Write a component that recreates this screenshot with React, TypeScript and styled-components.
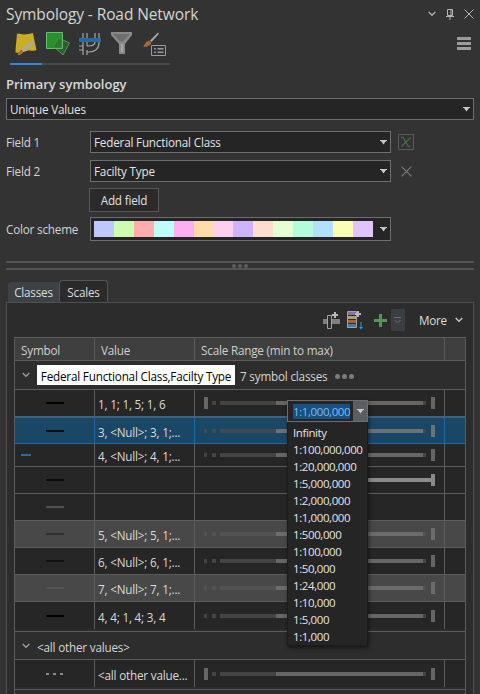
import React from 'react';
import styled, { createGlobalStyle } from 'styled-components';

const GlobalStyle = createGlobalStyle`
  html, body {
    margin: 0;
    padding: 0;
    height: 694px;
    overflow: hidden;
    background: #333333;
  }
  * {
    box-sizing: border-box;
  }
`;

const Pane = styled.div`
  width: 480px;
  height: 694px;
  overflow: hidden;
  padding: 0 6px;
  background: #333333;
  color: #dcdcdc;
  font-family: 'Open Sans', 'Noto Sans', sans-serif;
  font-size: 11.7px;
  letter-spacing: -0.19px;
`;

const TitleBar = styled.div`
  display: flex;
  align-items: center;
  height: 28px;
`;

const Title = styled.div`
  flex: 1;
  font-size: 15.5px;
  letter-spacing: -0.1px;
  color: #d4d4d4;
`;

const WindowButtons = styled.div`
  display: flex;
  align-items: center;
  gap: 10px;
`;

const IconBar = styled.div`
  display: flex;
  align-items: center;
  justify-content: space-between;
  height: 30px;
`;

const IconGroup = styled.div`
  display: flex;
  align-items: center;
  gap: 8px;
  padding-left: 9px;
`;

const TabLine = styled.div`
  width: 160px;
  height: 2px;
  margin: 5px 0 0 4px;
  background: #4a4a4a;
`;

const TabLineActive = styled.div`
  width: 32px;
  height: 2px;
  background: #2b8ae0;
`;

const Heading = styled.div`
  height: 18px;
  line-height: 18px;
  margin: 10px 0 5px;
  font-size: 13px;
  font-weight: 600;
  letter-spacing: 0;
  color: #d8d8d8;
`;

const Select = styled.div<{ $height?: number }>`
  display: flex;
  align-items: center;
  justify-content: space-between;
  height: ${p => p.$height ?? 22}px;
  padding: 0 3px;
  background: #252526;
  border: 1px solid #6e6e6e;
  color: #e2e2e2;
`;

const FieldRow = styled.div<{ $gap: number }>`
  display: grid;
  grid-template-columns: 84px 301px 1fr;
  align-items: center;
  margin-top: ${p => p.$gap}px;
`;

const FieldLabel = styled.div`
  color: #d4d4d4;
`;

const Side = styled.div`
  display: flex;
  justify-content: center;
  width: 16px;
  margin-left: 7px;
`;

const AddButton = styled.button`
  display: block;
  width: 70px;
  height: 24px;
  margin: 6px 0 0 83px;
  padding: 0;
  background: #2a2a2a;
  border: 1px solid #5a5a5a;
  color: #e0e0e0;
  font: inherit;
  letter-spacing: inherit;
`;

const Ramp = styled.div`
  display: flex;
  width: 279px;
  height: 16px;
`;

const Swatch = styled.div<{ $color: string }>`
  flex: 1;
  background: ${p => p.$color};
`;

const Splitter = styled.div`
  display: flex;
  align-items: center;
  justify-content: center;
  gap: 2px;
  height: 9px;
  margin-top: 20px;
  border-top: 2px solid #545454;
  border-bottom: 2px solid #545454;
`;

const Grip = styled.span`
  width: 4px;
  height: 4px;
  border-radius: 50%;
  background: #5e5e5e;
`;

const Tabs = styled.div`
  display: flex;
  align-items: flex-end;
  height: 22px;
  margin-top: 10px;
  padding-left: 2px;
`;

const Tab = styled.div<{ $active?: boolean }>`
  display: flex;
  align-items: center;
  justify-content: center;
  width: ${p => (p.$active ? 49 : 51)}px;
  height: ${p => (p.$active ? 22 : 20)}px;
  background: ${p => (p.$active ? '#2b2b2b' : '#3e4246')};
  border: ${p => (p.$active ? '1px solid #555555' : 'none')};
  border-bottom: none;
  border-radius: 3px 3px 0 0;
  color: #dcdcdc;
`;

const Panel = styled.div`
  height: 400px;
  padding: 0 7px;
  background: #2c2c2c;
  border: 1px solid #505050;
`;

const Toolbar = styled.div`
  display: flex;
  align-items: center;
  justify-content: flex-end;
  height: 34px;
  padding-right: 3px;
`;

const ToolIcon = styled.span<{ $gap: number }>`
  display: flex;
  margin-right: ${p => p.$gap}px;
`;

const SplitButton = styled.div`
  display: flex;
  align-items: center;
  justify-content: center;
  width: 14px;
  height: 22px;
  margin-right: 14px;
  background: #3a3d41;
`;

const More = styled.div`
  display: flex;
  align-items: center;
  gap: 8px;
  color: #dcdcdc;
`;

const Table = styled.div`
  border: 1px solid #5c5c5c;
  border-bottom: none;
`;

const HeaderRow = styled.div`
  display: grid;
  grid-template-columns: 80px 100px 250px 20px;
  height: 23px;
  background: #3f3f3f;
  border-bottom: 1px solid #5c5c5c;
`;

const HeaderCell = styled.div`
  display: flex;
  align-items: center;
  padding: 2px 0 0 6px;
  border-right: 1px solid #5c5c5c;
  color: #cfcfcf;
  &:last-child {
    border-right: none;
  }
`;

const GroupRow = styled.div<{ $height: number; $top?: number }>`
  display: flex;
  align-items: center;
  gap: 7px;
  height: ${p => p.$height}px;
  margin-top: ${p => p.$top ?? 0}px;
  padding-left: 7px;
  background: #2d2d2d;
  border-top: ${p => (p.$top ? '1px solid #5c5c5c' : 'none')};
  border-bottom: 1px solid #5c5c5c;
  color: #d4d4d4;
`;

const GroupLabel = styled.span`
  padding-top: 2px;
`;

const GroupInput = styled.div`
  display: flex;
  align-items: center;
  justify-content: center;
  width: 198px;
  height: 20px;
  padding-top: 1px;
  background: #ffffff;
  color: #000000;
  white-space: nowrap;
`;

const GroupMeta = styled.div`
  display: flex;
  align-items: center;
  gap: 8px;
  margin-left: -2px;
  padding-top: 2px;
`;

const Ellipsis = styled.div`
  display: flex;
  gap: 2px;
`;

const EllipsisDot = styled.span`
  width: 5px;
  height: 5px;
  border-radius: 50%;
  background: #7c7c7c;
`;

type Tone = 'plain' | 'selected' | 'alt';

const rowColors: Record<Tone, string> = {
  plain: '#262626',
  selected: '#1b4766',
  alt: '#484848',
};

const Row = styled.div<{ $tone: Tone; $height: number; $open?: boolean }>`
  display: grid;
  grid-template-columns: 80px 100px 250px 20px;
  height: ${p => p.$height}px;
  background: ${p => rowColors[p.$tone]};
  border-bottom: ${p => (p.$open ? 'none' : `1px solid ${p.$tone === 'selected' ? '#1f6aa5' : '#5c5c5c'}`)};
  border-top: ${p => (p.$tone === 'selected' ? '1px solid #1f6aa5' : 'none')};
`;

const Cell = styled.div<{ $selected?: boolean }>`
  display: flex;
  align-items: center;
  min-width: 0;
  border-right: 1px solid ${p => (p.$selected ? '#1f6aa5' : '#5c5c5c')};
  &:last-child {
    border-right: none;
  }
`;

const SymbolCell = styled(Cell)<{ $left?: boolean }>`
  justify-content: ${p => (p.$left ? 'flex-start' : 'center')};
  padding-left: ${p => (p.$left ? 6 : 0)}px;
`;

const ValueCell = styled(Cell)`
  padding: 2px 0 0 3px;
  color: #dadada;
  white-space: nowrap;
  overflow: hidden;
`;

const ScaleCell = styled(Cell)<{ $overlay?: boolean }>`
  position: ${p => (p.$overlay ? 'relative' : 'static')};
  padding-left: 9px;
`;

const SymbolLine = styled.span<{ $color: string; $width?: number }>`
  width: ${p => p.$width ?? 18}px;
  height: 2px;
  background: ${p => p.$color};
`;

const DashedLine = styled.span`
  width: 17px;
  height: 2px;
  background: repeating-linear-gradient(90deg, #8a8a8a 0 3px, transparent 3px 7px);
`;

const Slider = styled.div<{ $right?: boolean }>`
  display: flex;
  align-items: center;
  justify-content: ${p => (p.$right ? 'flex-end' : 'flex-start')};
  width: 231px;
  height: 12px;
`;

const Handle = styled.span<{ $color: string; $gapRight?: number; $gapLeft?: number }>`
  width: 4px;
  height: 12px;
  margin-right: ${p => p.$gapRight ?? 0}px;
  margin-left: ${p => p.$gapLeft ?? 0}px;
  background: ${p => p.$color};
`;

const Dot = styled.span<{ $color: string; $gapRight: number; $width?: number }>`
  width: ${p => p.$width ?? 4}px;
  height: 4px;
  margin-right: ${p => p.$gapRight}px;
  background: ${p => p.$color};
`;

const Track = styled.span<{ $color: string; $width: number }>`
  width: ${p => p.$width}px;
  height: 4px;
  background: ${p => p.$color};
`;

const ScaleMenu = styled.div`
  position: absolute;
  left: 92px;
  top: 10px;
  z-index: 5;
  width: 81px;
  font-size: 11.5px;
  letter-spacing: -0.4px;
  box-shadow: 1px 2px 4px rgba(0, 0, 0, 0.5);
`;

const ScaleInput = styled.div`
  display: flex;
  align-items: stretch;
  height: 22px;
  background: #252526;
  border: 1px solid #6e6e6e;
`;

const ScaleText = styled.div`
  display: flex;
  flex: 1;
  align-items: center;
  padding-left: 5px;
`;

const ScaleSelection = styled.span`
  background: #1b4f80;
  color: #79bdf0;
  line-height: 15px;
`;

const ScaleArrow = styled.div`
  display: flex;
  align-items: center;
  justify-content: center;
  width: 14px;
  background: #5a5d61;
`;

const ScaleList = styled.div`
  padding: 2px 0 0;
  background: #252526;
  border: 1px solid #1c1c1c;
  border-top: none;
`;

const ScaleItem = styled.div`
  height: 17px;
  padding-left: 5px;
  line-height: 17px;
  color: #e4e4e4;
  white-space: nowrap;
`;

const Arrow = () => (
  <svg width="7" height="5" viewBox="0 0 7 5">
    <path d="M0 0h7v1H6L3.5 4.5 1 1H0z" fill="#c8c8c8" />
  </svg>
);

const Chevron = ({ color = '#9a9a9a', size = 8 }: { color?: string; size?: number }) => (
  <svg width={size} height="6" viewBox="0 0 8 6">
    <path d="M.7 1l3.3 3.3L7.3 1" fill="none" stroke={color} strokeWidth="1.4" />
  </svg>
);

const PinIcon = () => (
  <svg width="8" height="11" viewBox="0 0 8 11">
    <path d="M1.5.5h5v6h-5zM5 .5v6M0 7.5h8M4 7.5V11" fill="none" stroke="#b4b4b4" strokeWidth="1" />
  </svg>
);

const CloseIcon = ({ size = 10, color = '#b4b4b4' }: { size?: number; color?: string }) => (
  <svg width={size} height={size} viewBox="0 0 10 10">
    <path d="M.5.5l9 9M9.5.5l-9 9" fill="none" stroke={color} strokeWidth="1" />
  </svg>
);

const MenuIcon = () => (
  <svg width="14" height="13" viewBox="0 0 14 13" style={{ marginRight: 3 }}>
    <path d="M0 0h14v3H0zM0 5h14v3H0zM0 10h14v3H0z" fill="#9c9c9c" />
  </svg>
);

const PaintIcon = () => (
  <svg width="23" height="25" viewBox="0 0 23 25">
    <path d="M1 3c3-.5 5 .5 8 .5 3 0 6-1 9-1.500.5 3 2.500 12 3.500 17-3 1.500-5 0-8 .5-3 .5-4 1.500-7 2-2 .3-4 .3-6 0 0-6 1-12 1.500-18.500z" fill="#c9ad23" />
    <path d="M17.500 9.500l2 2.500-11 9-2-2.500z" fill="#a8a8a8" />
    <path d="M6.500 18.500l2 2.500-2.500 2.500c-1 .6-3 .8-3.500.5.500-1 1-2.500 1.800-3.500z" fill="#a9683a" />
  </svg>
);

const FillIcon = () => (
  <svg width="25" height="25" viewBox="0 0 25 25">
    <path d="M7.500 15.500l5-8.500 11 5-6.500 12z" fill="#2f5c33" stroke="#4f9a55" />
    <path d="M.5 1.500h16v16H.5z" fill="#2b8f2f" stroke="#66c06a" />
    <path d="M7.500 15.500l5-8.500 3.500 1.600V17H8.300z" fill="#2a7a2e" stroke="#4f9a55" strokeWidth=".6" />
  </svg>
);

const RoadsIcon = () => (
  <svg width="24" height="24" viewBox="0 0 24 24">
    <path
      d="M4 2v5M8 2v5M16 2v5M20 2v5M4 11v13M8 11v4M8 19v5M0 15h4M0 19h4M8 15h1c4 0 7-1 7-4M8 21h2c6 0 10-3 10-10"
      fill="none"
      stroke="#a6a6a6"
      strokeWidth="1.2"
    />
    <path d="M0 7h22v4H0z" fill="#2a6aa0" />
  </svg>
);

const FunnelIcon = () => (
  <svg width="24" height="24" viewBox="0 0 24 24">
    <path d="M0 1h21v3l-7 9v10H8V13L0 4z" fill="#8a8a8a" />
    <path d="M2 3h17l-7 7.500H9z" fill="#6e6e6e" />
    <path d="M10 13h2v8h-2z" fill="#a8a8a8" />
  </svg>
);

const LabelIcon = () => (
  <svg width="24" height="25" viewBox="0 0 24 25">
    <path d="M15 1.500l1 1.200-7.500 8.300-1.500-1.500z" fill="#a8a8a8" />
    <path d="M6 9.500l2.500 2.500c-1.500 2.500-4 4-8 4 .5-2.500 2.500-5.500 5.500-6.500z" fill="#a9683a" />
    <path d="M8.500 14.500h14v10h-14z" fill="none" stroke="#9a9a9a" />
    <path d="M11 17h2v1.500h-2zM11 20.500h2V22h-2z" fill="#8d7fc0" />
    <path d="M14.500 17h6v1.500h-6zM14.500 20.500h6V22h-6z" fill="#9a9a9a" />
  </svg>
);

const FieldFxIcon = () => (
  <svg width="16" height="16" viewBox="0 0 16 16">
    <path d="M.5.5h15v15H.5z" fill="none" stroke="#5a5a5a" />
    <path d="M3.500 3c3 0 2 2 4 5s2 5 5 5M12.500 3.500l-9 9M3 3.500h3" fill="none" stroke="#466b46" strokeWidth="1.2" />
  </svg>
);

const AddBreakIcon = () => (
  <svg width="17" height="17" viewBox="0 0 17 17">
    <path d="M0 7h17v5H0z" fill="#7f7f7f" />
    <path d="M4.500 3.500h4v13h-4z" fill="#2c2c2c" stroke="#a2a2a2" />
    <path d="M11 0h2v2h2v2h-2v2h-2V4H9V2h2z" fill="#b8b8b8" />
  </svg>
);

const AddClassesIcon = () => (
  <svg width="17" height="19" viewBox="0 0 17 19">
    <path d="M.5.500h9v16h-9z" fill="#2c2c2c" stroke="#a2a2a2" />
    <path d="M1 1h8v3H1z" fill="#8270b4" />
    <path d="M1 5h8v3H1z" fill="#b0a060" />
    <path d="M1 9h8v3H1z" fill="#b06030" />
    <path d="M1 13h8v3H1z" fill="#3d7fb0" />
    <path d="M10 0h2v2h2v2h-2v2h-2V4H8V2h2z" fill="#b8b8b8" />
    <path d="M13.500 11h1v5H16l-2 2.500-2-2.500h1.500z" fill="#3c94dc" />
  </svg>
);

const PlusIcon = () => (
  <svg width="13" height="13" viewBox="0 0 13 13">
    <path d="M5 0h3v5h5v3H8v5H5V8H0V5h5z" fill="#4e9a4e" />
  </svg>
);

const SmallDrop = () => (
  <svg width="7" height="7" viewBox="0 0 7 7">
    <path d="M0 .5h7M.5 3l3 3 3-3" fill="none" stroke="#6e6e6e" />
  </svg>
);

const ramp = [
  '#bec8ff', '#ccfdb0', '#ffadad', '#bdfdfb', '#ffafef', '#ffdca8', '#ffd0ee',
  '#ceb4fd', '#ffdcd0', '#e6ffd2', '#b4fdda', '#b4e0ff', '#f8ffb4', '#e0c4ff',
];

const scales = [
  'Infinity', '1:100,000,000', '1:20,000,000', '1:5,000,000', '1:2,000,000', '1:1,000,000', '1:500,000',
  '1:100,000', '1:50,000', '1:24,000', '1:10,000', '1:5,000', '1:1,000',
];

interface SymbolClass {
  line: string;
  value: string;
  tone: Tone;
  height: number;
  slider: 'full' | 'dots' | 'right' | 'none';
  short?: boolean;
  overlay?: boolean;
}

const classes: SymbolClass[] = [
  { line: '#000000', value: '1, 1; 1, 5; 1, 6', tone: 'plain', height: 27, slider: 'full', overlay: true },
  { line: '#0d0d0d', value: '3, <Null>; 3, 1;...', tone: 'selected', height: 27, slider: 'dots' },
  { line: '#2a6aa0', value: '4, <Null>; 4, 1;...', tone: 'plain', height: 23, slider: 'dots', short: true },
  { line: '#0a0a0a', value: '', tone: 'plain', height: 27, slider: 'right' },
  { line: '#505050', value: '', tone: 'plain', height: 27, slider: 'none' },
  { line: '#303030', value: '5, <Null>; 5, 1;...', tone: 'alt', height: 27, slider: 'dots' },
  { line: '#111111', value: '6, <Null>; 6, 1;...', tone: 'plain', height: 27, slider: 'dots' },
  { line: '#555555', value: '7, <Null>; 7, 1;...', tone: 'alt', height: 27, slider: 'dots' },
];

const RangeSlider = ({ kind, tone }: { kind: SymbolClass['slider']; tone: Tone }) => {
  if (kind === 'none') return null;
  if (kind === 'right') {
    return (
      <Slider $right>
        <Track $color="#8a8a8a" $width={144} />
        <Handle $color="#8a8a8a" />
      </Slider>
    );
  }
  const dim = tone === 'alt' ? '#525252' : tone === 'selected' ? '#3f4a52' : '#444444';
  const lit = tone === 'alt' ? '#6c6c6c' : tone === 'selected' ? '#6a7278' : '#666666';
  return (
    <Slider>
      {kind === 'full' ? <Handle $color={lit} $gapRight={4} /> : <Dot $color={dim} $gapRight={5} $width={3} />}
      <Dot $color={dim} $gapRight={4} />
      <Track $color={dim} $width={56} />
      <Track $color={lit} $width={147} />
      <Dot $color={dim} $gapRight={0} $width={3} />
      <Handle $color={lit} $gapLeft={5} />
    </Slider>
  );
};

const App: React.FC = () => (
  <>
    <GlobalStyle />
    <Pane>
      <TitleBar>
        <Title>Symbology - Road Network</Title>
        <WindowButtons>
          <Chevron color="#b0b0b0" />
          <PinIcon />
          <CloseIcon />
        </WindowButtons>
      </TitleBar>
      <IconBar>
        <IconGroup>
          <PaintIcon />
          <FillIcon />
          <RoadsIcon />
          <FunnelIcon />
          <LabelIcon />
        </IconGroup>
        <MenuIcon />
      </IconBar>
      <TabLine>
        <TabLineActive />
      </TabLine>
      <Heading>Primary symbology</Heading>
      <Select>
        Unique Values
        <Arrow />
      </Select>
      <FieldRow $gap={11}>
        <FieldLabel>Field 1</FieldLabel>
        <Select>
          Federal Functional Class
          <Arrow />
        </Select>
        <Side>
          <FieldFxIcon />
        </Side>
      </FieldRow>
      <FieldRow $gap={7}>
        <FieldLabel>Field 2</FieldLabel>
        <Select>
          Facilty Type
          <Arrow />
        </Select>
        <Side>
          <CloseIcon size={11} color="#7c7c7c" />
        </Side>
      </FieldRow>
      <AddButton>Add field</AddButton>
      <FieldRow $gap={5}>
        <FieldLabel>Color scheme</FieldLabel>
        <Select $height={24}>
          <Ramp>
            {ramp.map(color => (
              <Swatch key={color} $color={color} />
            ))}
          </Ramp>
          <Arrow />
        </Select>
      </FieldRow>
      <Splitter>
        <Grip />
        <Grip />
        <Grip />
      </Splitter>
      <Tabs>
        <Tab>Classes</Tab>
        <Tab $active>Scales</Tab>
      </Tabs>
      <Panel>
        <Toolbar>
          <ToolIcon $gap={7}>
            <AddBreakIcon />
          </ToolIcon>
          <ToolIcon $gap={10}>
            <AddClassesIcon />
          </ToolIcon>
          <ToolIcon $gap={4}>
            <PlusIcon />
          </ToolIcon>
          <SplitButton>
            <SmallDrop />
          </SplitButton>
          <More>
            More
            <Chevron color="#c8c8c8" />
          </More>
        </Toolbar>
        <Table>
          <HeaderRow>
            <HeaderCell>Symbol</HeaderCell>
            <HeaderCell>Value</HeaderCell>
            <HeaderCell>Scale Range (min to max)</HeaderCell>
            <HeaderCell />
          </HeaderRow>
          <GroupRow $height={29}>
            <Chevron />
            <GroupInput>Federal Functional Class,Facilty Type</GroupInput>
            <GroupMeta>
              7 symbol classes
              <Ellipsis>
                <EllipsisDot />
                <EllipsisDot />
                <EllipsisDot />
              </Ellipsis>
            </GroupMeta>
          </GroupRow>
          {classes.map(item => (
            <Row key={item.value + item.line} $tone={item.tone} $height={item.height}>
              <SymbolCell $selected={item.tone === 'selected'} $left={item.short}>
                <SymbolLine $color={item.line} $width={item.short ? 10 : 18} />
              </SymbolCell>
              <ValueCell $selected={item.tone === 'selected'}>{item.value}</ValueCell>
              <ScaleCell $selected={item.tone === 'selected'} $overlay={item.overlay}>
                <RangeSlider kind={item.slider} tone={item.tone} />
                {item.overlay && (
                  <ScaleMenu>
                    <ScaleInput>
                      <ScaleText>
                        <ScaleSelection>1:1,000,000</ScaleSelection>
                      </ScaleText>
                      <ScaleArrow>
                        <Arrow />
                      </ScaleArrow>
                    </ScaleInput>
                    <ScaleList>
                      {scales.map(scale => (
                        <ScaleItem key={scale}>{scale}</ScaleItem>
                      ))}
                    </ScaleList>
                  </ScaleMenu>
                )}
              </ScaleCell>
              <Cell />
            </Row>
          ))}
          <Row $tone="plain" $height={27} $open>
            <SymbolCell>
              <SymbolLine $color="#000000" />
            </SymbolCell>
            <ValueCell>4, 4; 1, 4; 3, 4</ValueCell>
            <ScaleCell>
              <RangeSlider kind="dots" tone="plain" />
            </ScaleCell>
            <Cell />
          </Row>
          <GroupRow $height={29} $top={2}>
            <Chevron />
            <GroupLabel>{'<all other values>'}</GroupLabel>
          </GroupRow>
          <Row $tone="plain" $height={27} $open>
            <SymbolCell>
              <DashedLine />
            </SymbolCell>
            <ValueCell>{'<all other value...'}</ValueCell>
            <ScaleCell>
              <RangeSlider kind="full" tone="plain" />
            </ScaleCell>
            <Cell />
          </Row>
          <GroupRow $height={10} $top={2} />
        </Table>
      </Panel>
    </Pane>
  </>
);

export default App;
